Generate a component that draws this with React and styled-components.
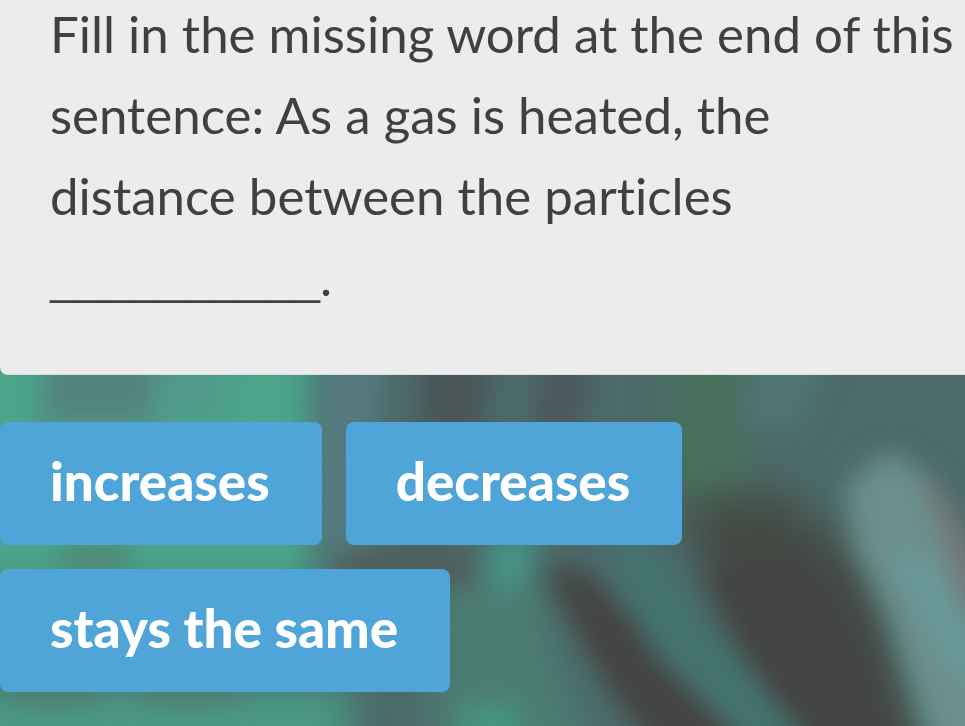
import React, { useState } from 'react';
import styled, { createGlobalStyle } from 'styled-components';

const ANSWERS = ['increases', 'decreases', 'stays the same'];

const App = () => {
	const [selected, setSelected] = useState(null);

	return (
		<Page>
			<GlobalStyle />
			<Backdrop />
			<Question>
				Fill in the missing word at the end of this sentence: As a gas is heated, the distance
				between the particles <Blank>__________</Blank>.
			</Question>
			<Answers>
				{ANSWERS.map(answer => (
					<Answer
						key={answer}
						type="button"
						aria-pressed={selected === answer}
						onClick={() => setSelected(answer)}
					>
						{answer}
					</Answer>
				))}
			</Answers>
		</Page>
	);
};

export default App;

// Out of focus leaves behind the quiz
const Backdrop = () => (
	<BackdropArt viewBox="0 0 965 726" preserveAspectRatio="xMidYMid slice" aria-hidden="true">
		<defs>
			<filter id="soft" x="-50%" y="-50%" width="200%" height="200%" colorInterpolationFilters="sRGB">
				<feGaussianBlur stdDeviation="13" />
			</filter>
			<filter id="softer" x="-50%" y="-50%" width="200%" height="200%" colorInterpolationFilters="sRGB">
				<feGaussianBlur stdDeviation="20" />
			</filter>
		</defs>
		<rect width="965" height="726" fill="#4b6a69" />
		<g filter="url(#softer)">
			<path d="M-60 300H318V590H-60Z" fill="#4ba58b" />
			<path d="M-60 685H350V790H-60Z" fill="#4b9a85" />
			<path d="M430 590L540 540L550 640L600 780L430 780Z" fill="#4c7d73" />
			<path d="M670 340L755 340L740 500L680 500Z" fill="#48725c" />
			<path d="M680 500L780 490L870 570L930 780L790 780L730 640Z" fill="#444a44" />
		</g>
		<g filter="url(#soft)">
			<path d="M45 340H165L150 425H40Z" fill="#53837e" />
			<path d="M160 340H235L220 425H150Z" fill="#529a8a" />
			<path d="M325 340H385L370 560H318Z" fill="#557a80" />
			<path d="M420 330H495L480 440H420Z" fill="#4a5658" />
			<path d="M540 340H590L580 440H535Z" fill="#4b585c" />
			<path d="M340 550H470V585H340Z" fill="#505d59" />
			<path d="M60 545H130V568H60Z" fill="#50806f" />
			<path d="M10 685H100V700H10Z" fill="#50776b" />
			<path d="M140 685H240V700H140Z" fill="#50776b" />
			<path d="M750 350H830L800 430H745Z" fill="#4f7674" />
			<path d="M485 540H540L520 590H495Z" fill="#479588" />
			<path d="M460 705H520V770H460Z" fill="#45967e" />
			<path d="M540 565L585 570L660 650L770 780L680 780L610 690Z" fill="#444442" />
			<path d="M600 530L660 550L700 620L840 780L780 780L650 650Z" fill="#447370" />
			<path d="M710 570L800 560L860 650L895 780L850 780L755 650Z" fill="#434343" />
			<path d="M845 485L890 450L935 480L990 620L1000 780L935 760L890 620L855 550Z" fill="#6b908c" />
			<path d="M920 475L945 490L990 580L970 620Z" fill="#74777a" />
			<path d="M890 550L930 560L980 660L980 700L940 650Z" fill="#6a9a9e" />
		</g>
	</BackdropArt>
);

// Styled components
const GlobalStyle = createGlobalStyle`
	* {
		box-sizing: border-box;
	}
	body {
		margin: 0;
		background: #4b6a69;
		font-family: Lato, 'Open Sans', sans-serif;
		font-variant-ligatures: none;
	}
`;

const Page = styled.main`
	display: flow-root;
	position: relative;
	min-height: 100vh;
	overflow: hidden;
	isolation: isolate;
`;

const BackdropArt = styled.svg`
	position: absolute;
	inset: 0;
	z-index: -1;
	width: 100%;
	height: 100%;
`;

const Question = styled.h1`
	margin: -7px 0 0;
	padding: 0 0 57px 50px;
	border-bottom: 1px solid #d5dedc;
	border-bottom-left-radius: 8px;
	background: #ececec;
	color: #404040;
	font-size: 51px;
	font-weight: 400;
	line-height: 81px;
`;

// The serif underscores join into one unbroken rule
const Blank = styled.span`
	font-family: 'Liberation Serif', serif;
	font-size: 54px;
	line-height: 1;
`;

const Answers = styled.div`
	display: flex;
	flex-wrap: wrap;
	gap: 24px;
	padding: 47px 24px 34px 0;
`;

const Answer = styled.button`
	padding: 18px 52px 24px 50px;
	border: 0;
	border-radius: 8px;
	background: #50a5d8;
	color: #fff;
	font-family: inherit;
	font-size: 53px;
	font-weight: 900;
	line-height: 81px;
	cursor: pointer;
`;
